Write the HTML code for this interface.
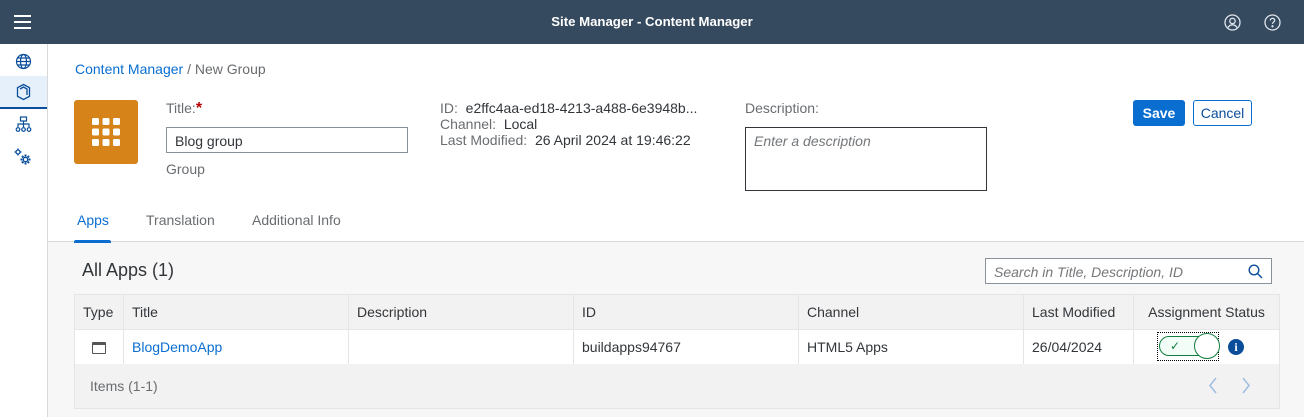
<!DOCTYPE html>
<html><head><style>
*{box-sizing:border-box;margin:0;padding:0}
body{width:1304px;height:417px;overflow:hidden;font-family:"Liberation Sans",Arial,sans-serif;font-size:14px;color:#32363a;background:#f7f7f7;position:relative}
.a{position:absolute}
.hdr{left:0;top:0;width:1304px;height:44px;background:#354a5f;color:#fff}
.side{left:0;top:44px;width:48px;height:373px;background:#fff;border-right:1px solid #d9d9d9}
.top{left:48px;top:44px;width:1256px;height:198px;background:#fff;border-bottom:1px solid #d9d9d9}
.lbl{color:#6a6d70}
.blue{color:#0a6ed1}
table{border-collapse:collapse;font-size:14px}
td{border:1px solid #e5e5e5;padding:0 8px;height:35px}
</style></head><body>
<div class="a hdr">
 <div class="a" style="left:14px;top:15px;width:17px;height:2px;background:#fff;box-shadow:0 6px 0 #fff,0 12px 0 #fff"></div>
 <div class="a" style="left:0;width:1304px;top:14px;text-align:center;font-weight:bold;font-size:13.2px">Site Manager - Content Manager</div>
 <svg class="a" style="left:1224px;top:14px" width="17" height="17" viewBox="0 0 17 17" fill="none" stroke="#dfe6ee" stroke-width="1.3"><circle cx="8.5" cy="8.5" r="7.5"/><circle cx="8.5" cy="7" r="2.7"/><path d="M4 13.5c1.2-2 2.7-2.7 4.5-2.7s3.3.7 4.5 2.7"/></svg>
 <svg class="a" style="left:1264px;top:14px" width="17" height="17" viewBox="0 0 17 17" fill="none" stroke="#dfe6ee" stroke-width="1.3"><circle cx="8.5" cy="8.5" r="7.5"/><path d="M6.3 6.5c0-1.3 1-2.2 2.2-2.2s2.2.9 2.2 2.1c0 1.6-2.2 1.7-2.2 3.5"/><circle cx="8.5" cy="12.3" r=".5" fill="#dfe6ee"/></svg>
</div>
<div class="a side">
 <svg class="a" style="left:15px;top:9px" width="17" height="17" viewBox="0 0 17 17" fill="none" stroke="#0a4e9b" stroke-width="1.2"><circle cx="8.5" cy="8.5" r="7"/><ellipse cx="8.5" cy="8.5" rx="3" ry="7"/><path d="M1.5 8.5h14M2.5 5h12M2.5 12h12"/></svg>
 <div class="a" style="left:0;top:32px;width:47px;height:33px;background:#e5f0fa;border-bottom:2px solid #0a4e9b"></div>
 <svg class="a" style="left:15px;top:39px" width="17" height="18" viewBox="0 0 17 18" fill="none" stroke="#0a4e9b" stroke-width="1.3"><path d="M8.5 1.5l6 3.2v8.6l-6 3.2-6-3.2V4.7z M5 6l3.5-2 3.5 2v6"/></svg>
 <svg class="a" style="left:15px;top:72px" width="17" height="17" viewBox="0 0 17 17" fill="none" stroke="#0a4e9b" stroke-width="1.2"><rect x="5.5" y="1" width="6" height="4"/><path d="M8.5 5v3M3 11V8h11v3M8.5 8v3"/><circle cx="3" cy="13.5" r="1.8"/><circle cx="8.5" cy="13.5" r="1.8"/><circle cx="14" cy="13.5" r="1.8"/></svg>
 <svg class="a" style="left:14px;top:104px" width="19" height="19" viewBox="0 0 19 19" fill="none" stroke="#0a4e9b" stroke-width="1.3"><circle cx="4" cy="4" r="2"/><path d="M4 .5v1M4 6.5v1M.5 4h1M6.5 4h1"/><circle cx="11.5" cy="11.5" r="2.2"/><path d="M11.5 6.5v2M11.5 14.5v2M6.5 11.5h2M14.5 11.5h2M8 8l1.4 1.4M13.6 13.6L15 15M15 8l-1.4 1.4M9.4 13.6L8 15" stroke-width="2"/></svg>
</div>
<div class="a top"></div>
<div class="a" style="left:75px;top:61px"><span class="blue">Content Manager</span> <span class="lbl">/ New Group</span></div>
<div class="a" style="left:74px;top:100px;width:64px;height:64px;background:#d6841a;border-radius:3px">
 <svg class="a" style="left:18px;top:18px" width="28" height="28" viewBox="0 0 28 28" fill="#fff"><rect x="0" y="0" width="7" height="7" rx="1.5"/><rect x="10.5" y="0" width="7" height="7" rx="1.5"/><rect x="21" y="0" width="7" height="7" rx="1.5"/><rect x="0" y="10.5" width="7" height="7" rx="1.5"/><rect x="10.5" y="10.5" width="7" height="7" rx="1.5"/><rect x="21" y="10.5" width="7" height="7" rx="1.5"/><rect x="0" y="21" width="7" height="7" rx="1.5"/><rect x="10.5" y="21" width="7" height="7" rx="1.5"/><rect x="21" y="21" width="7" height="7" rx="1.5"/></svg>
</div>
<div class="a lbl" style="left:166px;top:100px">Title:<span style="color:#bb0000;font-size:16px;font-weight:bold">*</span></div>
<div class="a" style="left:166px;top:127px;width:242px;height:26px;border:1px solid #89919a;padding:5px 8px;font-size:14px">Blog group</div>
<div class="a lbl" style="left:166px;top:161px">Group</div>
<div class="a lbl" style="left:440px;top:100px;line-height:16px">ID:&nbsp; <span style="color:#32363a">e2ffc4aa-ed18-4213-a488-6e3948b...</span><br>Channel:&nbsp; <span style="color:#32363a">Local</span><br>Last Modified:&nbsp; <span style="color:#32363a">26 April 2024 at 19:46:22</span></div>
<div class="a lbl" style="left:745px;top:100px">Description:</div>
<div class="a" style="left:745px;top:127px;width:242px;height:64px;border:1px solid #32363a;padding:5px 8px;font-style:italic;color:#74777a">Enter a description</div>
<div class="a" style="left:1133px;top:100px;width:52px;height:26px;background:#0a6ed1;color:#fff;font-weight:bold;border-radius:3px;text-align:center;line-height:26px">Save</div>
<div class="a" style="left:1193px;top:100px;width:59px;height:26px;border:1px solid #0a6ed1;color:#0a4e9b;border-radius:3px;text-align:center;line-height:24px">Cancel</div>
<div class="a blue" style="left:77px;top:212px">Apps</div>
<div class="a" style="left:74px;top:240px;width:37px;height:3px;background:#0a6ed1;border-radius:2px 2px 0 0"></div>
<div class="a lbl" style="left:146px;top:212px">Translation</div>
<div class="a lbl" style="left:252px;top:212px">Additional Info</div>
<div class="a" style="left:82px;top:260px;font-size:18px">All Apps (1)</div>
<div class="a" style="left:985px;top:258px;width:287px;height:26px;border:1px solid #89919a;background:#fff;padding:5px 8px;font-style:italic;color:#74777a;font-size:14px">Search in Title, Description, ID
 <svg class="a" style="left:262px;top:5px" width="15" height="15" viewBox="0 0 15 15" fill="none" stroke="#0a4e9b" stroke-width="1.4"><circle cx="6" cy="6" r="4.8"/><path d="M9.5 9.5l4.5 4.5"/></svg></div>
<table class="a" style="left:74px;top:294px;width:1206px">
<tr style="background:#f2f2f2"><td style="width:49px">Type</td><td style="width:225px">Title</td><td style="width:225px">Description</td><td style="width:225px">ID</td><td style="width:225px">Channel</td><td style="width:110px">Last Modified</td><td style="text-align:center">Assignment Status</td></tr>
<tr style="background:#fff"><td style="text-align:center"><span style="display:inline-block;width:14px;height:12px;border:1.3px solid #555;border-top-width:3px;vertical-align:middle;border-radius:1px"></span></td><td class="blue">BlogDemoApp</td><td></td><td>buildapps94767</td><td>HTML5 Apps</td><td>26/04/2024</td><td style="position:relative">
 <div class="a" style="left:23px;top:2px;width:62px;height:29px;border:1px dotted #000"></div>
 <div class="a" style="left:25px;top:6px;width:58px;height:20px;border:1px solid #107e3e;border-radius:10px;background:#f1fdf6;color:#107e3e;font-size:12px;padding-left:10px;line-height:18px">✓</div>
 <div class="a" style="left:60px;top:3px;width:26px;height:26px;border:1px solid #107e3e;border-radius:50%;background:#fff"></div>
 <div class="a" style="left:94px;top:9px;width:16px;height:16px;border-radius:50%;background:#0a4e9b;color:#fff;font-weight:bold;font-size:12px;text-align:center;line-height:16px;font-family:'Liberation Serif',serif">i</div>
</td></tr>
</table>
<div class="a" style="left:74px;top:364px;width:1206px;height:45px;background:#f2f2f2;border:1px solid #e5e5e5;border-top:none">
 <div class="a lbl" style="left:15px;top:14px">Items (1-1)</div>
 <svg class="a" style="left:1133px;top:13px" width="10" height="17" viewBox="0 0 10 17" fill="none" stroke="#9fbde0" stroke-width="1.5"><path d="M8 1L2 8.5 8 16"/></svg>
 <svg class="a" style="left:1166px;top:13px" width="10" height="17" viewBox="0 0 10 17" fill="none" stroke="#9fbde0" stroke-width="1.5"><path d="M2 1l6 7.5L2 16"/></svg>
</div>
</body></html>
